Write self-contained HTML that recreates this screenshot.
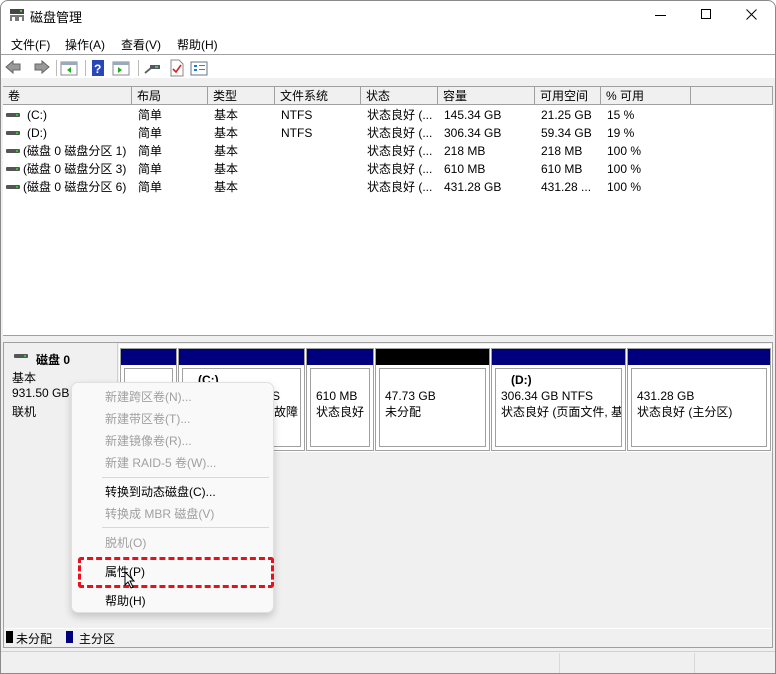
<!DOCTYPE html>
<html><head><meta charset="utf-8"><style>
*{margin:0;padding:0;box-sizing:border-box}
body{width:776px;height:674px;overflow:hidden;background:#fff;font-family:"Liberation Sans","Noto Sans CJK SC",sans-serif;font-size:12px;color:#000;position:relative}
.a{position:absolute;white-space:nowrap}
.win{position:absolute;left:0;top:0;width:776px;height:674px;border-radius:8px 8px 0 0;overflow:hidden}
.frame{position:absolute;left:0;top:0;width:776px;height:674px;border:1px solid #8a8a8a;border-radius:8px 8px 0 0;pointer-events:none}
.hd{position:absolute;top:86px;height:19px;background:#f0f0f0;border-right:1px solid #a0a0a0;border-bottom:1px solid #a0a0a0;border-top:1px solid #a0a0a0;padding:2px 5px;line-height:14px}
.row{position:absolute;left:0;height:18px;line-height:18px}
.row span{position:absolute}
.drv{position:absolute;left:6px;top:7px;width:14px;height:4px;background:#555;border-radius:1px}
.drv:after{content:"";position:absolute;right:2px;top:1px;width:2px;height:2px;background:#2c2}
.part{position:absolute;top:348px;height:103px;background:#fff;border:1px solid #a0a0a0}
.part .bar{position:absolute;left:0;right:0;top:0;height:16px;background:#00007f}
.part .in{position:absolute;left:3px;right:3px;top:19px;bottom:3px;border:1px solid #a0a0a0;padding:3px 5px;line-height:16px;overflow:hidden;white-space:nowrap}
.mi{position:absolute;left:33px;color:#a0a0a0;font-size:12px}
.mi.e{color:#000}
.sep{position:absolute;left:30px;right:4px;height:1px;background:#d8d8d8}
</style></head><body>
<div class="win">
<svg class="a" style="left:9px;top:8px" width="16" height="14"><rect x="1" y="1" width="14" height="5" fill="#444"/><rect x="11" y="2" width="2" height="2" fill="#4c4"/><rect x="1" y="7" width="14" height="6" fill="#777"/><rect x="3" y="9" width="3" height="4" fill="#fff"/><rect x="10" y="9" width="3" height="4" fill="#fff"/></svg>
<div class="a" style="left:30px;top:7px;font-size:13px">磁盘管理</div>
<div class="a" style="left:655px;top:15px;width:11px;height:1px;background:#000"></div>
<div class="a" style="left:701px;top:9px;width:10px;height:10px;border:1px solid #000"></div>
<svg class="a" style="left:746px;top:9px" width="11" height="11"><path d="M0.5 0.5L10.5 10.5M10.5 0.5L0.5 10.5" stroke="#000" stroke-width="1"/></svg>
<div class="a" style="left:11px;top:36px">文件(F)</div>
<div class="a" style="left:65px;top:36px">操作(A)</div>
<div class="a" style="left:121px;top:36px">查看(V)</div>
<div class="a" style="left:177px;top:36px">帮助(H)</div>
<div class="a" style="left:0;top:54px;width:776px;height:1px;background:#a0a0a0"></div>
<svg class="a" style="left:5px;top:59px" width="210" height="18">
<path d="M1 8L8 2V5H15V11H8V14Z" fill="#999" stroke="#666"/>
<path d="M44 8L37 2V5H30V11H37V14Z" fill="#999" stroke="#666"/>
<rect x="51" y="1" width="1" height="16" fill="#bbb"/>
<rect x="56" y="3" width="16" height="13" fill="#fff" stroke="#889"/><rect x="56" y="3" width="16" height="3" fill="#9ab"/><path d="M66 8L62 11L66 14Z" fill="#2a2"/>
<rect x="80" y="1" width="1" height="16" fill="#bbb"/>
<rect x="87" y="1" width="12" height="16" fill="#2846b8"/><text x="89" y="14" fill="#fff" font-size="12" font-weight="bold" font-family="Liberation Sans">?</text>
<rect x="108" y="3" width="16" height="13" fill="#fff" stroke="#889"/><rect x="108" y="3" width="16" height="3" fill="#9ab"/><path d="M113 8L117 11L113 14Z" fill="#2a2"/>
<rect x="133" y="1" width="1" height="16" fill="#bbb"/>
<path d="M140 14L146 9" stroke="#666" stroke-width="2"/><rect x="145" y="6" width="10" height="4" fill="#556"/><rect x="150" y="7" width="3" height="2" fill="#4c4"/>
<path d="M166 1H174L178 5V17H166Z" fill="#fff" stroke="#888"/><path d="M168 10L171 13L176 6" stroke="#d22" stroke-width="1.6" fill="none"/>
<rect x="186" y="3" width="16" height="13" fill="#fff" stroke="#678"/><rect x="189" y="6" width="3" height="2" fill="#27c"/><rect x="189" y="10" width="3" height="2" fill="#27c"/><rect x="194" y="6" width="6" height="1" fill="#678"/><rect x="194" y="10" width="6" height="1" fill="#678"/>
</svg>
<div class="a" style="left:0;top:78px;width:776px;height:8px;background:#f0f0f0"></div>
<div class="hd" style="left:3px;width:129px">卷</div>
<div class="hd" style="left:132px;width:76px">布局</div>
<div class="hd" style="left:208px;width:67px">类型</div>
<div class="hd" style="left:275px;width:86px">文件系统</div>
<div class="hd" style="left:361px;width:77px">状态</div>
<div class="hd" style="left:438px;width:97px">容量</div>
<div class="hd" style="left:535px;width:66px">可用空间</div>
<div class="hd" style="left:601px;width:90px">% 可用</div>
<div class="hd" style="left:691px;width:82px"></div>
<div class="a" style="left:0;top:86px;width:3px;height:250px;background:#f0f0f0"></div>
<div class="a" style="left:773px;top:86px;width:3px;height:250px;background:#f0f0f0"></div>
<div class="row" style="top:106px;width:776px"><i class="drv"></i><span style="left:27px">(C:)</span><span style="left:138px">简单</span><span style="left:214px">基本</span><span style="left:281px">NTFS</span><span style="left:367px">状态良好 (...</span><span style="left:444px">145.34 GB</span><span style="left:541px">21.25 GB</span><span style="left:607px">15 %</span></div>
<div class="row" style="top:124px;width:776px"><i class="drv"></i><span style="left:27px">(D:)</span><span style="left:138px">简单</span><span style="left:214px">基本</span><span style="left:281px">NTFS</span><span style="left:367px">状态良好 (...</span><span style="left:444px">306.34 GB</span><span style="left:541px">59.34 GB</span><span style="left:607px">19 %</span></div>
<div class="row" style="top:142px;width:776px"><i class="drv"></i><span style="left:23px">(磁盘 0 磁盘分区 1)</span><span style="left:138px">简单</span><span style="left:214px">基本</span><span style="left:367px">状态良好 (...</span><span style="left:444px">218 MB</span><span style="left:541px">218 MB</span><span style="left:607px">100 %</span></div>
<div class="row" style="top:160px;width:776px"><i class="drv"></i><span style="left:23px">(磁盘 0 磁盘分区 3)</span><span style="left:138px">简单</span><span style="left:214px">基本</span><span style="left:367px">状态良好 (...</span><span style="left:444px">610 MB</span><span style="left:541px">610 MB</span><span style="left:607px">100 %</span></div>
<div class="row" style="top:178px;width:776px"><i class="drv"></i><span style="left:23px">(磁盘 0 磁盘分区 6)</span><span style="left:138px">简单</span><span style="left:214px">基本</span><span style="left:367px">状态良好 (...</span><span style="left:444px">431.28 GB</span><span style="left:541px">431.28 ...</span><span style="left:607px">100 %</span></div>
<div class="a" style="left:0;top:335px;width:776px;height:339px;background:#f0f0f0"></div>
<div class="a" style="left:3px;top:335px;width:770px;height:1px;background:#a0a0a0"></div>
<div class="a" style="left:3px;top:342px;width:770px;height:1px;background:#a0a0a0"></div>
<div class="a" style="left:3px;top:342px;width:1px;height:305px;background:#a0a0a0"></div>
<div class="a" style="left:772px;top:342px;width:1px;height:305px;background:#a0a0a0"></div>
<div class="a" style="left:4px;top:343px;width:114px;height:110px;background:#f0f0f0;border-right:1px solid #d0d0d0"></div>
<div class="a" style="left:119px;top:344px;width:653px;height:108px;background:#fff"></div>
<i class="drv" style="left:14px;top:354px"></i>
<div class="a" style="left:36px;top:351px;font-weight:bold">磁盘 0</div>
<div class="a" style="left:12px;top:369px">基本</div>
<div class="a" style="left:12px;top:386px">931.50 GB</div>
<div class="a" style="left:12px;top:403px">联机</div>
<div class="part" style="left:120px;width:57px"><div class="bar"></div><div class="in"></div></div>
<div class="part" style="left:178px;width:127px"><div class="bar"></div><div class="in"><b style="margin-left:10px">(C:)</b><br>145.34 GB NTFS<br>状态良好 (启动, 故障</div></div>
<div class="part" style="left:306px;width:68px"><div class="bar"></div><div class="in" style="padding-top:19px">610 MB<br>状态良好</div></div>
<div class="part" style="left:375px;width:115px"><div class="bar" style="background:#000"></div><div class="in" style="padding-top:19px">47.73 GB<br>未分配</div></div>
<div class="part" style="left:491px;width:135px"><div class="bar"></div><div class="in"><b style="margin-left:10px">(D:)</b><br>306.34 GB NTFS<br>状态良好 (页面文件, 基</div></div>
<div class="part" style="left:627px;width:144px"><div class="bar"></div><div class="in" style="padding-top:19px">431.28 GB<br>状态良好 (主分区)</div></div>
<div class="a" style="left:4px;top:628px;width:768px;height:1px;background:#fff"></div>
<div class="a" style="left:6px;top:631px;width:7px;height:12px;background:#000"></div>
<div class="a" style="left:16px;top:630px">未分配</div>
<div class="a" style="left:66px;top:631px;width:7px;height:12px;background:#00007f"></div>
<div class="a" style="left:79px;top:630px">主分区</div>
<div class="a" style="left:3px;top:647px;width:770px;height:1px;background:#a0a0a0"></div>
<div class="a" style="left:0;top:651px;width:776px;height:1px;background:#d0d0d0"></div>
<div class="a" style="left:559px;top:653px;width:1px;height:20px;background:#d8d8d8"></div>
<div class="a" style="left:694px;top:653px;width:1px;height:20px;background:#d8d8d8"></div>
<div class="a" style="left:71px;top:382px;width:203px;height:231px;background:#f9f9f9;border:1px solid #e0e0e0;border-radius:7px;box-shadow:0 4px 8px rgba(0,0,0,0.18)">
<div class="mi" style="top:5px">新建跨区卷(N)...</div>
<div class="mi" style="top:27px">新建带区卷(T)...</div>
<div class="mi" style="top:49px">新建镜像卷(R)...</div>
<div class="mi" style="top:71px">新建 RAID-5 卷(W)...</div>
<div class="sep" style="top:94px"></div>
<div class="mi e" style="top:100px">转换到动态磁盘(C)...</div>
<div class="mi" style="top:122px">转换成 MBR 磁盘(V)</div>
<div class="sep" style="top:144px"></div>
<div class="mi" style="top:151px">脱机(O)</div>
<div class="mi e" style="top:180px">属性(P)</div>
<div class="mi e" style="top:209px">帮助(H)</div>
</div>
<div class="a" style="left:78px;top:557px;width:196px;height:31px;border:3px dashed #e8101a;border-radius:3px"></div>
<svg class="a" style="left:124px;top:571px" width="12" height="18"><path d="M1 1V14L4 11L7 17L9 16L6 10H10Z" fill="#fff" stroke="#000"/></svg>
</div>
<div class="frame"></div>
</body></html>
